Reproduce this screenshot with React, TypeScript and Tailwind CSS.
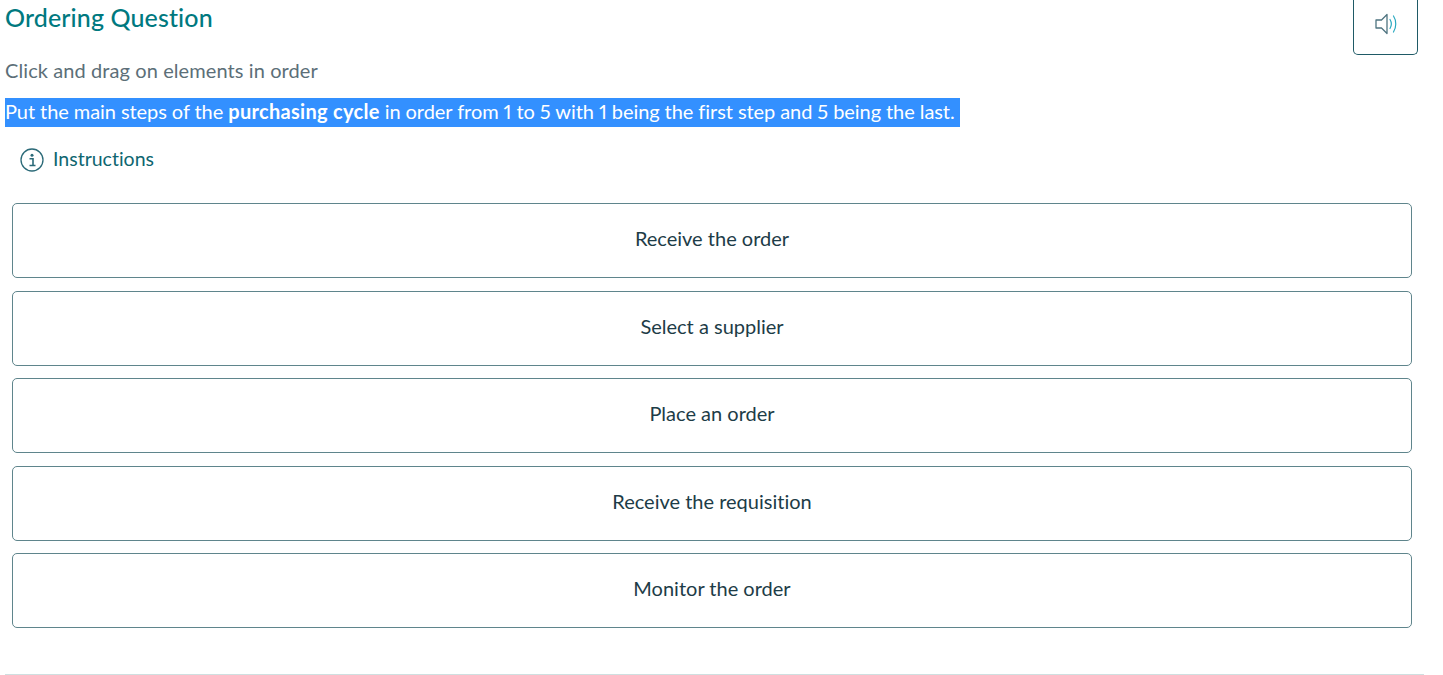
const steps = [
  "Receive the order",
  "Select a supplier",
  "Place an order",
  "Receive the requisition",
  "Monitor the order",
];

export default function App() {
  return (
    <div className="w-[1443px] h-[675px] overflow-hidden bg-white font-['Lato',sans-serif] [font-variant-ligatures:none]">
      <div className="w-[1424px] pl-[5px]">
        {/* header */}
        <div className="flex items-start justify-between h-[55px]">
          <h1 className="text-[25px] leading-[36px] -mt-[1px] font-medium tracking-[0.12px] text-[#00797f]">Ordering Question</h1>
          <button className="mr-[6px] w-[65px] h-[55px] flex items-center justify-center pb-[7px] border border-[#1f5a66] border-t-0 rounded-b-[5px]">
            <svg width="24" height="22" viewBox="0 0 24 22" fill="none">
              <path d="M2 7h5.500L13 1.500v19L7.500 15H2z" stroke="#4f7480" strokeWidth="1.300" strokeLinejoin="round" />
              <path d="M16 6.500c1.500 2.500 1.500 6.500 0 9" stroke="#2aa9c0" strokeWidth="1.200" strokeLinecap="round" />
              <path d="M19.500 3c3 4.500 3 11.500 0 16" stroke="#2aa9c0" strokeWidth="1.200" strokeLinecap="round" />
            </svg>
          </button>
        </div>

        <p className="mt-[3px] text-[20px] leading-[24px] tracking-[0.09px] text-[#5c6f78]">Click and drag on elements in order</p>

        <p className="mt-[16px] h-[29px] bg-[#3390ff] w-fit pr-[5px] text-[20px] leading-[26px] tracking-[-0.07px] text-white proportional-nums">
          Put the main steps of the <b className="tracking-[0.3px]">purchasing cycle</b> in order from 1 to 5 with 1 being the first step and 5 being the last.
        </p>

        <div className="mt-[19px] ml-[15px] flex items-center gap-[9px] text-[19.500px] leading-[28px] text-[#0f6670]">
          <svg width="24" height="24" viewBox="0 0 24 24" fill="none">
            <circle cx="12" cy="12" r="11" stroke="#2b6a78" strokeWidth="1.300" />
            <circle cx="12" cy="7.200" r="1.500" fill="#2b6a78" />
            <path d="M9.500 10.800H13V17M9.500 17.500h6" stroke="#2b6a78" strokeWidth="1.600" />
          </svg>
          <span className="-mt-[1px]">Instructions</span>
        </div>

        {/* steps */}
        <div className="mt-[30px] ml-[7px] w-[1400px] flex flex-col gap-[12.500px]">
          {steps.map((step) => (
            <div
              key={step}
              className="h-[75px] pb-[5px] flex items-center justify-center rounded-[5px] border border-[#5f858c] text-[20px] text-[#1d3c47]"
            >
              {step}
            </div>
          ))}
        </div>

        <hr className="mt-[46px] border-0 border-t border-[#cfdfe0]" />
      </div>
    </div>
  );
}
